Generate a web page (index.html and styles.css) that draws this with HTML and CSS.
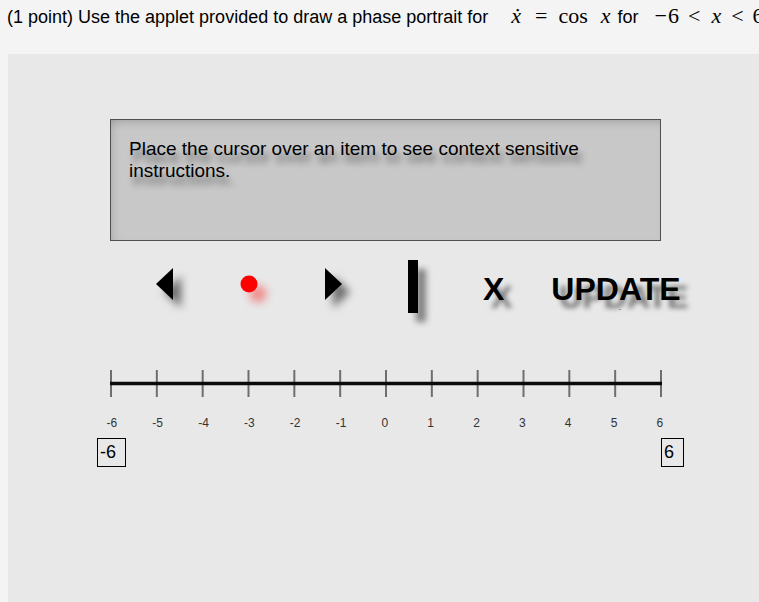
FILE: index.html
```html
<!DOCTYPE html>
<html>
<head>
<meta charset="utf-8">
<link rel="stylesheet" href="styles.css">
</head>
<body>
<div class="header"><span class="q">(1 point) Use the applet provided to draw a phase portrait for</span><span class="m t-xdot"><i class="mi">ẋ</i></span><span class="m t-eq">=</span><span class="m t-cos">cos</span><span class="m mi t-x1">x</span><span class="q t-for">for</span><span class="m t-neg">−</span><span class="m t-negsix">6</span><span class="m t-lt1">&lt;</span><span class="m mi t-x2">x</span><span class="m t-lt2">&lt;</span><span class="m t-six">6</span></div>
<div class="applet">
  <div class="info">
    <p>Place the cursor over an item to see context sensitive instructions.</p>
  </div>
  <div class="controls">
    <svg class="tri tri-left" width="17" height="32" viewBox="0 0 17 32"><polygon points="17,0 17,32 0,16" fill="#000"/></svg>
    <svg class="dot" width="18" height="18" viewBox="0 0 18 18"><circle cx="9" cy="9" r="8.5" fill="#ff0000"/></svg>
    <svg class="tri tri-right" width="17" height="32" viewBox="0 0 17 32"><polygon points="0,0 0,32 17,16" fill="#000"/></svg>
    <span class="bar"></span>
    <span class="ctl ctl-x">X</span>
    <span class="ctl ctl-update">UPDATE</span>
  </div>
  <svg class="axis" width="580" height="67" viewBox="0 0 580 67">
    <g stroke="#6e6e6e" stroke-width="2">
      <line x1="11" y1="5" x2="11" y2="32"/>
      <line x1="56.83" y1="5" x2="56.83" y2="32"/>
      <line x1="102.67" y1="5" x2="102.67" y2="32"/>
      <line x1="148.5" y1="5" x2="148.5" y2="32"/>
      <line x1="194.33" y1="5" x2="194.33" y2="32"/>
      <line x1="240.17" y1="5" x2="240.17" y2="32"/>
      <line x1="286" y1="5" x2="286" y2="32"/>
      <line x1="331.83" y1="5" x2="331.83" y2="32"/>
      <line x1="377.67" y1="5" x2="377.67" y2="32"/>
      <line x1="423.5" y1="5" x2="423.5" y2="32"/>
      <line x1="469.33" y1="5" x2="469.33" y2="32"/>
      <line x1="515.17" y1="5" x2="515.17" y2="32"/>
      <line x1="561" y1="5" x2="561" y2="32"/>
    </g>
    <line x1="10" y1="18.5" x2="562" y2="18.5" stroke="#0a0a0a" stroke-width="3.5"/>
    <g class="ticklabels" fill="#333">
      <text x="6.5" y="61.7">-6</text>
      <text x="52.3" y="61.7">-5</text>
      <text x="98.2" y="61.7">-4</text>
      <text x="144" y="61.7">-3</text>
      <text x="189.8" y="61.7">-2</text>
      <text x="235.7" y="61.7">-1</text>
      <text x="281.5" y="61.7">0</text>
      <text x="327.3" y="61.7">1</text>
      <text x="373.2" y="61.7">2</text>
      <text x="419" y="61.7">3</text>
      <text x="464.8" y="61.7">4</text>
      <text x="510.7" y="61.7">5</text>
      <text x="556.5" y="61.7">6</text>
    </g>
  </svg>
  <div class="fields">
    <span class="field field-lo">-6</span>
    <span class="field field-hi">6</span>
  </div>
</div>
</body>
</html>
```
FILE: styles.css
```css
html, body {
  margin: 0;
  padding: 0;
}
body {
  background: #f4f4f4;
  font-family: "Liberation Sans", Arial, sans-serif;
  color: #000;
  overflow: hidden;
  width: 759px;
  height: 602px;
}
.header {
  display: flex;
  align-items: baseline;
  height: 54px;
  box-sizing: border-box;
  padding: 6px 0 0 7px;
  font-size: 18px;
  line-height: 20px;
  white-space: nowrap;
  overflow: hidden;
}
.q {
  flex: none;
}
.m {
  flex: none;
  font-family: "Liberation Serif", "DejaVu Serif", serif;
  font-size: 22px;
}
.mi {
  font-style: italic;
}
.t-xdot { margin-left: 23px; }
.t-eq { margin-left: 14px; }
.t-cos { margin-left: 11px; }
.t-x1 { margin-left: 13px; }
.t-for { margin-left: 7px; }
.t-neg { margin-left: 16px; }
.t-negsix { margin-left: 1px; }
.t-lt1 { margin-left: 9px; }
.t-x2 { margin-left: 11px; }
.t-lt2 { margin-left: 10px; }
.t-six { margin-left: 9px; }
.applet {
  margin-left: 8px;
  height: 548px;
  box-sizing: border-box;
  background: #e8e8e8;
  padding: 65px 0 0 102px;
  overflow: hidden;
}
.info {
  width: 551px;
  height: 122px;
  box-sizing: border-box;
  border: 1px solid #505050;
  background: #c8c8c8;
  padding: 18px 0 0 18px;
  box-shadow: inset 0 8px 10px -6px rgba(0, 0, 0, 0.18), inset 8px 0 10px -6px rgba(0, 0, 0, 0.12);
}
.info p {
  margin: 0;
  width: 470px;
  font-size: 19px;
  line-height: 22px;
  text-shadow: 4px 8px 6px rgba(0, 0, 0, 0.45);
}
.controls {
  display: flex;
  align-items: flex-start;
  height: 75px;
  margin-top: 14px;
}
.tri {
  display: block;
  margin-top: 13px;
  filter: drop-shadow(8px 8px 4px rgba(0, 0, 0, 0.55));
}
.tri-left {
  margin-left: 46px;
}
.dot {
  display: block;
  margin-top: 20px;
  margin-left: 67px;
  filter: drop-shadow(9px 10px 4px rgba(255, 0, 0, 0.4));
}
.tri-right {
  margin-left: 67px;
}
.bar {
  display: block;
  width: 10px;
  height: 53px;
  margin-top: 5px;
  margin-left: 66px;
  background: #000;
  box-shadow: 8px 9px 6px rgba(0, 0, 0, 0.45);
}
.ctl {
  display: block;
  margin-top: 16px;
  font-size: 32px;
  line-height: 36px;
  font-weight: bold;
  text-shadow: 8px 8px 5px rgba(0, 0, 0, 0.5);
}
.ctl-x {
  margin-left: 65px;
}
.ctl-update {
  margin-left: 47px;
  position: relative;
}
.ctl-update::after {
  content: "";
  position: absolute;
  left: 68px;
  top: 38px;
  width: 2px;
  height: 1px;
  background: #999;
}
.axis {
  display: block;
  margin-top: 35px;
  margin-left: -10px;
}
.ticklabels {
  font-family: "Liberation Sans", Arial, sans-serif;
  font-size: 12px;
}
.fields {
  display: flex;
  justify-content: space-between;
  width: 587px;
  margin-top: 6px;
  margin-left: -13px;
}
.field {
  display: block;
  box-sizing: border-box;
  height: 29px;
  border: 1px solid #000;
  padding-left: 2px;
  font-size: 18px;
  line-height: 27px;
}
.field-lo {
  width: 29px;
}
.field-hi {
  width: 23px;
}
```
